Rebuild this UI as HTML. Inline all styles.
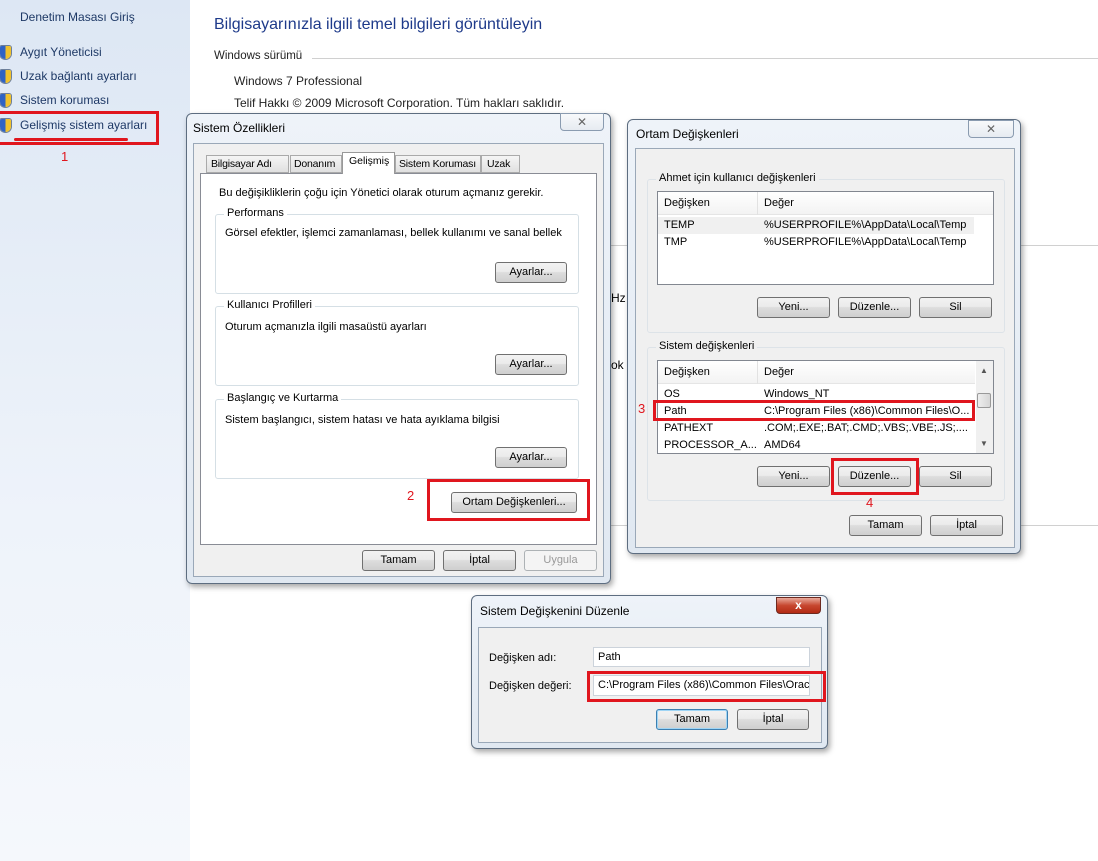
<!DOCTYPE html>
<html><head><meta charset="utf-8"><style>
*{box-sizing:border-box;margin:0;padding:0}
body{width:1098px;height:861px;position:relative;overflow:hidden;background:#fff;font-family:"Liberation Sans",sans-serif;font-size:11px;color:#000}
.a{position:absolute;white-space:nowrap}
.side{position:absolute;left:0;top:0;width:190px;height:861px;background:linear-gradient(180deg,#dde7f4 0%,#eef3fa 60%,#f5f8fc 100%)}
.sh{position:absolute;width:11px;height:13px;left:0;border-radius:2px 2px 6px 6px;background:linear-gradient(90deg,#2f63c4 50%,#f0c22c 50%);box-shadow:0 0 0 1px #6d7f9a}
.dlg{position:absolute;border:1px solid #5d6d80;border-radius:6px;background:linear-gradient(180deg,#eef3f9,#e0e8f1);box-shadow:2px 3px 6px rgba(0,0,0,.35)}
.in{position:absolute;background:#f0f0f0;border:1px solid #9aa8b8}
.btn{position:absolute;height:21px;border:1px solid #707070;border-radius:3px;background:linear-gradient(180deg,#f2f2f2 0%,#ebebeb 45%,#dddddd 50%,#cfcfcf 100%);text-align:center;line-height:19px;font-size:11px}
.grp{position:absolute;border:1px solid #d5dfe5;border-radius:3px}
.gl{position:absolute;top:-8px;left:8px;background:#fff;padding:0 3px}
.red{position:absolute;border:3px solid #e0161e}
.rn{position:absolute;color:#e0161e;font-size:13px}
.cl{position:absolute;height:18px;border:1px solid #8a9bb0;border-radius:0 0 4px 4px;background:linear-gradient(#f8f9fb,#e6ebf1);text-align:center;color:#666;font-size:12px;line-height:16px}
.list{position:absolute;background:#fff;border:1px solid #828790}
.tab{position:absolute;top:11px;height:18px;border:1px solid #aaa;background:linear-gradient(#f5f5f5,#e0e0e0);padding:2px 4px;font-size:10.5px;letter-spacing:-0.2px;white-space:nowrap;overflow:hidden}
</style></head><body>
<div class="side"></div>
<div class="a" style="left:20px;top:10px;color:#1e3966;font-size:12px">Denetim Masası Giriş</div>
<div class="sh" style="top:46px"></div><div class="a" style="left:20px;top:45px;color:#1e3966;font-size:12px">Aygıt Yöneticisi</div>
<div class="sh" style="top:70px"></div><div class="a" style="left:20px;top:69px;color:#1e3966;font-size:12px">Uzak bağlantı ayarları</div>
<div class="sh" style="top:94px"></div><div class="a" style="left:20px;top:93px;color:#1e3966;font-size:12px">Sistem koruması</div>
<div class="sh" style="top:119px"></div><div class="a" style="left:20px;top:118px;color:#1e3966;font-size:12px">Gelişmiş sistem ayarları</div>
<div class="red" style="left:-3px;top:111px;width:162px;height:34px;border-left:none"></div>
<div class="a" style="left:14px;top:138px;width:114px;height:3px;background:#e0161e;border-radius:2px"></div>
<div class="rn" style="left:61px;top:149px">1</div>

<div class="a" style="left:214px;top:16px;color:#1e3a8a;font-size:16px">Bilgisayarınızla ilgili temel bilgileri görüntüleyin</div>
<div class="a" style="left:214px;top:50px;font-size:11.5px;color:#222">Windows sürümü</div>
<div class="a" style="left:312px;top:58px;width:786px;height:1px;background:#d0d0d0"></div>
<div class="a" style="left:234px;top:74px;font-size:12px;color:#222">Windows 7 Professional</div>
<div class="a" style="left:234px;top:96px;font-size:12px;color:#222">Telif Hakkı © 2009 Microsoft Corporation. Tüm hakları saklıdır.</div>
<div class="a" style="left:600px;top:245px;width:498px;height:1px;background:#d0d0d0"></div>
<div class="a" style="left:600px;top:525px;width:498px;height:1px;background:#d0d0d0"></div>
<div class="a" style="left:611px;top:291px;font-size:12px">Hz</div>
<div class="a" style="left:611px;top:358px;font-size:12px">ok</div>

<!-- Dialog 1 -->
<div class="dlg" style="left:186px;top:113px;width:425px;height:471px">
 <div class="a" style="left:6px;top:7px;font-size:12px">Sistem Özellikleri</div>
 <div class="cl" style="left:373px;top:-1px;width:44px">✕</div>
 <div class="in" style="left:6px;top:29px;width:411px;height:434px">
  <div class="tab" style="left:12px;width:83px">Bilgisayar Adı</div>
  <div class="tab" style="left:96px;width:52px;padding:2px 3px">Donanım</div>
  <div class="a" style="left:148px;top:8px;width:53px;height:22px;border:1px solid #999;border-bottom:none;background:#fff;padding:2px 6px;z-index:2;font-size:10.5px">Gelişmiş</div>
  <div class="tab" style="left:201px;width:86px;padding:2px 3px">Sistem Koruması</div>
  <div class="tab" style="left:287px;width:39px;padding:2px 5px">Uzak</div>
  <div class="a" style="left:6px;top:29px;width:397px;height:372px;background:#fff;border:1px solid #898c95">
   <div class="a" style="left:18px;top:13px">Bu değişikliklerin çoğu için Yönetici olarak oturum açmanız gerekir.</div>
   <div class="grp" style="left:14px;top:40px;width:364px;height:80px"><div class="gl">Performans</div>
    <div class="a" style="left:9px;top:12px">Görsel efektler, işlemci zamanlaması, bellek kullanımı ve sanal bellek</div>
    <div class="btn" style="left:279px;top:47px;width:72px">Ayarlar...</div></div>
   <div class="grp" style="left:14px;top:132px;width:364px;height:80px"><div class="gl">Kullanıcı Profilleri</div>
    <div class="a" style="left:9px;top:14px">Oturum açmanızla ilgili masaüstü ayarları</div>
    <div class="btn" style="left:279px;top:47px;width:72px">Ayarlar...</div></div>
   <div class="grp" style="left:14px;top:225px;width:364px;height:80px"><div class="gl">Başlangıç ve Kurtarma</div>
    <div class="a" style="left:9px;top:14px">Sistem başlangıcı, sistem hatası ve hata ayıklama bilgisi</div>
    <div class="btn" style="left:279px;top:47px;width:72px">Ayarlar...</div></div>
   <div class="btn" style="left:250px;top:318px;width:126px">Ortam Değişkenleri...</div>
  </div>
  <div class="btn" style="left:168px;top:406px;width:73px">Tamam</div>
  <div class="btn" style="left:249px;top:406px;width:73px">İptal</div>
  <div class="btn" style="left:330px;top:406px;width:73px;color:#999;border-color:#adb2b5;background:#f4f4f4">Uygula</div>
 </div>
</div>
<div class="red" style="left:427px;top:479px;width:163px;height:42px"></div>
<div class="rn" style="left:407px;top:488px">2</div>

<!-- Dialog 2 -->
<div class="dlg" style="left:627px;top:119px;width:394px;height:435px">
 <div class="a" style="left:8px;top:7px;font-size:12px">Ortam Değişkenleri</div>
 <div class="cl" style="left:340px;top:0px;width:46px">✕</div>
 <div class="in" style="left:7px;top:28px;width:380px;height:400px">
  <div class="grp" style="left:11px;top:30px;width:358px;height:154px;border-color:#dde3e8"><div class="gl" style="background:#f0f0f0">Ahmet için kullanıcı değişkenleri</div></div>
  <div class="list" style="left:21px;top:42px;width:337px;height:94px">
   <div class="a" style="left:0;top:0;width:335px;height:23px;background:linear-gradient(#fff,#f3f3f3);border-bottom:1px solid #e5e5e5"></div>
   <div class="a" style="left:99px;top:0;width:1px;height:23px;background:#e2e2e2"></div>
   <div class="a" style="left:6px;top:5px">Değişken</div><div class="a" style="left:106px;top:5px">Değer</div>
   <div class="a" style="left:0;top:25px;width:316px;height:17px;background:#f0f0f0"></div>
   <div class="a" style="left:6px;top:27px">TEMP</div><div class="a" style="left:106px;top:27px">%USERPROFILE%\AppData\Local\Temp</div>
   <div class="a" style="left:6px;top:44px">TMP</div><div class="a" style="left:106px;top:44px">%USERPROFILE%\AppData\Local\Temp</div>
  </div>
  <div class="btn" style="left:121px;top:148px;width:73px">Yeni...</div>
  <div class="btn" style="left:202px;top:148px;width:73px">Düzenle...</div>
  <div class="btn" style="left:283px;top:148px;width:73px">Sil</div>
  <div class="grp" style="left:11px;top:198px;width:358px;height:154px;border-color:#dde3e8"><div class="gl" style="background:#f0f0f0">Sistem değişkenleri</div></div>
  <div class="list" style="left:21px;top:211px;width:337px;height:94px">
   <div class="a" style="left:0;top:0;width:317px;height:23px;background:linear-gradient(#fff,#f3f3f3);border-bottom:1px solid #e5e5e5"></div>
   <div class="a" style="left:99px;top:0;width:1px;height:23px;background:#e2e2e2"></div>
   <div class="a" style="left:6px;top:5px">Değişken</div><div class="a" style="left:106px;top:5px">Değer</div>
   <div class="a" style="left:6px;top:27px">OS</div><div class="a" style="left:106px;top:27px">Windows_NT</div>
   <div class="a" style="left:6px;top:44px">Path</div><div class="a" style="left:106px;top:44px">C:\Program Files (x86)\Common Files\O...</div>
   <div class="a" style="left:6px;top:61px">PATHEXT</div><div class="a" style="left:106px;top:61px">.COM;.EXE;.BAT;.CMD;.VBS;.VBE;.JS;....</div>
   <div class="a" style="left:6px;top:78px">PROCESSOR_A...</div><div class="a" style="left:106px;top:78px">AMD64</div>
   <div class="a" style="left:318px;top:0;width:17px;height:92px;background:#f0f0f0"></div>
   <div class="a" style="left:322px;top:5px;font-size:8px;color:#555">▲</div>
   <div class="a" style="left:319px;top:32px;width:14px;height:15px;border:1px solid #999;border-radius:2px;background:linear-gradient(90deg,#eee,#d6d6d6)"></div>
   <div class="a" style="left:322px;top:78px;font-size:8px;color:#555">▼</div>
  </div>
  <div class="btn" style="left:121px;top:317px;width:73px">Yeni...</div>
  <div class="btn" style="left:202px;top:317px;width:73px">Düzenle...</div>
  <div class="btn" style="left:283px;top:317px;width:73px">Sil</div>
  <div class="btn" style="left:213px;top:366px;width:73px">Tamam</div>
  <div class="btn" style="left:294px;top:366px;width:73px">İptal</div>
 </div>
</div>
<div class="red" style="left:653px;top:400px;width:322px;height:21px"></div>
<div class="rn" style="left:638px;top:401px">3</div>
<div class="red" style="left:831px;top:458px;width:88px;height:37px"></div>
<div class="rn" style="left:866px;top:495px">4</div>

<!-- Dialog 3 -->
<div class="dlg" style="left:471px;top:595px;width:357px;height:154px">
 <div class="a" style="left:8px;top:8px;font-size:12px">Sistem Değişkenini Düzenle</div>
 <div class="a" style="left:304px;top:1px;width:45px;height:17px;border:1px solid #6d2a20;border-radius:0 0 4px 4px;background:linear-gradient(#e9a99a,#c7472f 50%,#b22a14);color:#fff;text-align:center;font-weight:bold;font-size:12px;line-height:15px">x</div>
 <div class="in" style="left:6px;top:31px;width:344px;height:116px">
  <div class="a" style="left:10px;top:24px">Değişken adı:</div>
  <div class="a" style="left:114px;top:19px;width:217px;height:20px;background:#fff;border:1px solid #ccd3db;padding:3px 4px">Path</div>
  <div class="a" style="left:10px;top:52px">Değişken değeri:</div>
  <div class="a" style="left:114px;top:47px;width:217px;height:21px;background:#fff;border:1px solid #ccd3db;padding:3px 4px;overflow:hidden">C:\Program Files (x86)\Common Files\Oracle</div>
  <div class="btn" style="left:177px;top:81px;width:72px;border-color:#3c7fb1;box-shadow:inset 0 0 0 1px #9fd5f5">Tamam</div>
  <div class="btn" style="left:258px;top:81px;width:72px">İptal</div>
 </div>
</div>
<div class="red" style="left:587px;top:671px;width:239px;height:31px"></div>
</body></html>
